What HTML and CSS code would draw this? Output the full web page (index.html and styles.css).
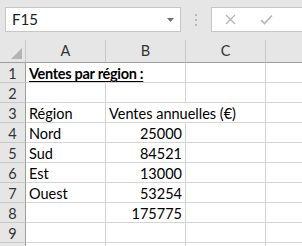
FILE: index.html
```html
<!DOCTYPE html>
<html lang="fr">
<head>
    <meta charset="UTF-8">
    <title>Ventes par région</title>
    <link rel="stylesheet" href="styles.css">
</head>
<body>
    <div class="toolbar">
        <div class="namebox">
            <span class="ref">F15</span>
            <svg class="arrow" width="7" height="4" viewBox="0 0 7 4"><path d="M0 0H7L3.5 4Z" fill="#6f6f6f"/></svg>
        </div>
        <div class="sep">
            <i></i><i></i><i></i>
        </div>
        <div class="formula">
            <svg class="btn" width="11" height="11" viewBox="0 0 11 11"><path d="M1 1L10 10M10 1L1 10" stroke="#b4b4b4" stroke-width="1.2" fill="none"/></svg>
            <svg class="btn ok" width="13" height="11" viewBox="0 0 13 11"><path d="M1 6L4.5 9.5L12 1.5" stroke="#b4b4b4" stroke-width="1.6" fill="none"/></svg>
            <span class="fx">f</span>
        </div>
    </div>

    <div class="sheet">
        <div class="corner"><span class="tri"></span></div>
        <div class="colhead">A</div>
        <div class="colhead">B</div>
        <div class="colhead">C</div>
        <div class="colhead"></div>

        <div class="rowhead">1</div>
        <div class="cell spill"><b class="title">Ventes par région :</b></div>
        <div class="cell"></div>
        <div class="cell"></div>
        <div class="cell"></div>

        <div class="rowhead">2</div>
        <div class="cell"></div>
        <div class="cell"></div>
        <div class="cell"></div>
        <div class="cell"></div>

        <div class="rowhead">3</div>
        <div class="cell">Région</div>
        <div class="cell spill">Ventes annuelles (€)</div>
        <div class="cell"></div>
        <div class="cell"></div>

        <div class="rowhead">4</div>
        <div class="cell">Nord</div>
        <div class="cell num">25000</div>
        <div class="cell"></div>
        <div class="cell"></div>

        <div class="rowhead">5</div>
        <div class="cell">Sud</div>
        <div class="cell num">84521</div>
        <div class="cell"></div>
        <div class="cell"></div>

        <div class="rowhead">6</div>
        <div class="cell">Est</div>
        <div class="cell num">13000</div>
        <div class="cell"></div>
        <div class="cell"></div>

        <div class="rowhead">7</div>
        <div class="cell">Ouest</div>
        <div class="cell num">53254</div>
        <div class="cell"></div>
        <div class="cell"></div>

        <div class="rowhead">8</div>
        <div class="cell"></div>
        <div class="cell num">175775</div>
        <div class="cell"></div>
        <div class="cell"></div>

        <div class="rowhead">9</div>
        <div class="cell"></div>
        <div class="cell"></div>
        <div class="cell"></div>
        <div class="cell"></div>

        <div class="rowhead"></div>
        <div class="cell"></div>
        <div class="cell"></div>
        <div class="cell"></div>
        <div class="cell"></div>
    </div>
</body>
</html>
```

FILE: styles.css
```css
body {
    margin: 0;
    background: #e6e6e6;
    font-family: Lato, "Liberation Sans", sans-serif;
    overflow: hidden;
    width: 302px;
    height: 246px;
}

.toolbar {
    display: flex;
    align-items: flex-start;
    height: 40px;
    padding: 7px 0 0 5px;
    box-sizing: border-box;
}

.namebox {
    flex-shrink: 0;
    width: 176px;
    height: 25px;
    box-sizing: border-box;
    background: white;
    border: 1px solid #c6c6c6;
    display: flex;
    align-items: center;
    justify-content: space-between;
    padding: 0 6px 1px 6px;
}

.ref {
    font-size: 15px;
    color: #222;
}

.arrow {
    margin-top: 1px;
}

.sep {
    flex-shrink: 0;
    width: 30px;
    height: 25px;
    display: flex;
    flex-direction: column;
    align-items: center;
    justify-content: center;
    gap: 3px;
}

.sep i {
    display: block;
    width: 2px;
    height: 2px;
    background: #b9b9b9;
}

.formula {
    flex-shrink: 0;
    width: 120px;
    height: 25px;
    box-sizing: border-box;
    background: white;
    border: 1px solid #c6c6c6;
    display: flex;
    align-items: center;
    padding-left: 13px;
    gap: 24px;
}

.fx {
    font-family: "Liberation Serif", serif;
    font-style: italic;
    font-size: 16px;
    color: #444;
    margin-left: 6px;
}

.sheet {
    display: grid;
    grid-template-columns: 26px 80px 80px 80px 80px;
    grid-auto-rows: 20px;
    grid-template-rows: 23px;
    background: white;
    font-size: 14.5px;
}

.corner,
.colhead,
.rowhead {
    background: #e6e6e6;
    color: #333;
    box-sizing: border-box;
}

.corner {
    border-right: 1px solid #c8c8c8;
    border-bottom: 1px solid #9e9e9e;
    position: relative;
}

.tri {
    position: absolute;
    right: 3px;
    bottom: 3px;
    width: 0;
    height: 0;
    border-left: 11px solid transparent;
    border-bottom: 11px solid #b4b4b4;
}

.colhead {
    border-right: 1px solid #c8c8c8;
    border-bottom: 1px solid #9e9e9e;
    text-align: center;
    line-height: 22px;
}

.rowhead {
    border-right: 1px solid #9e9e9e;
    border-bottom: 1px solid #c8c8c8;
    text-align: center;
    line-height: 21px;
}

.cell {
    box-sizing: border-box;
    border-right: 1px solid #d4d4d4;
    border-bottom: 1px solid #d4d4d4;
    padding: 0 3px;
    line-height: 21px;
    white-space: nowrap;
    color: #000;
}

.spill {
    border-right-color: white;
}

.num {
    text-align: right;
}

.title {
    letter-spacing: -0.3px;
    text-decoration: underline;
    text-decoration-thickness: 1px;
    text-underline-offset: 2px;
}
```
